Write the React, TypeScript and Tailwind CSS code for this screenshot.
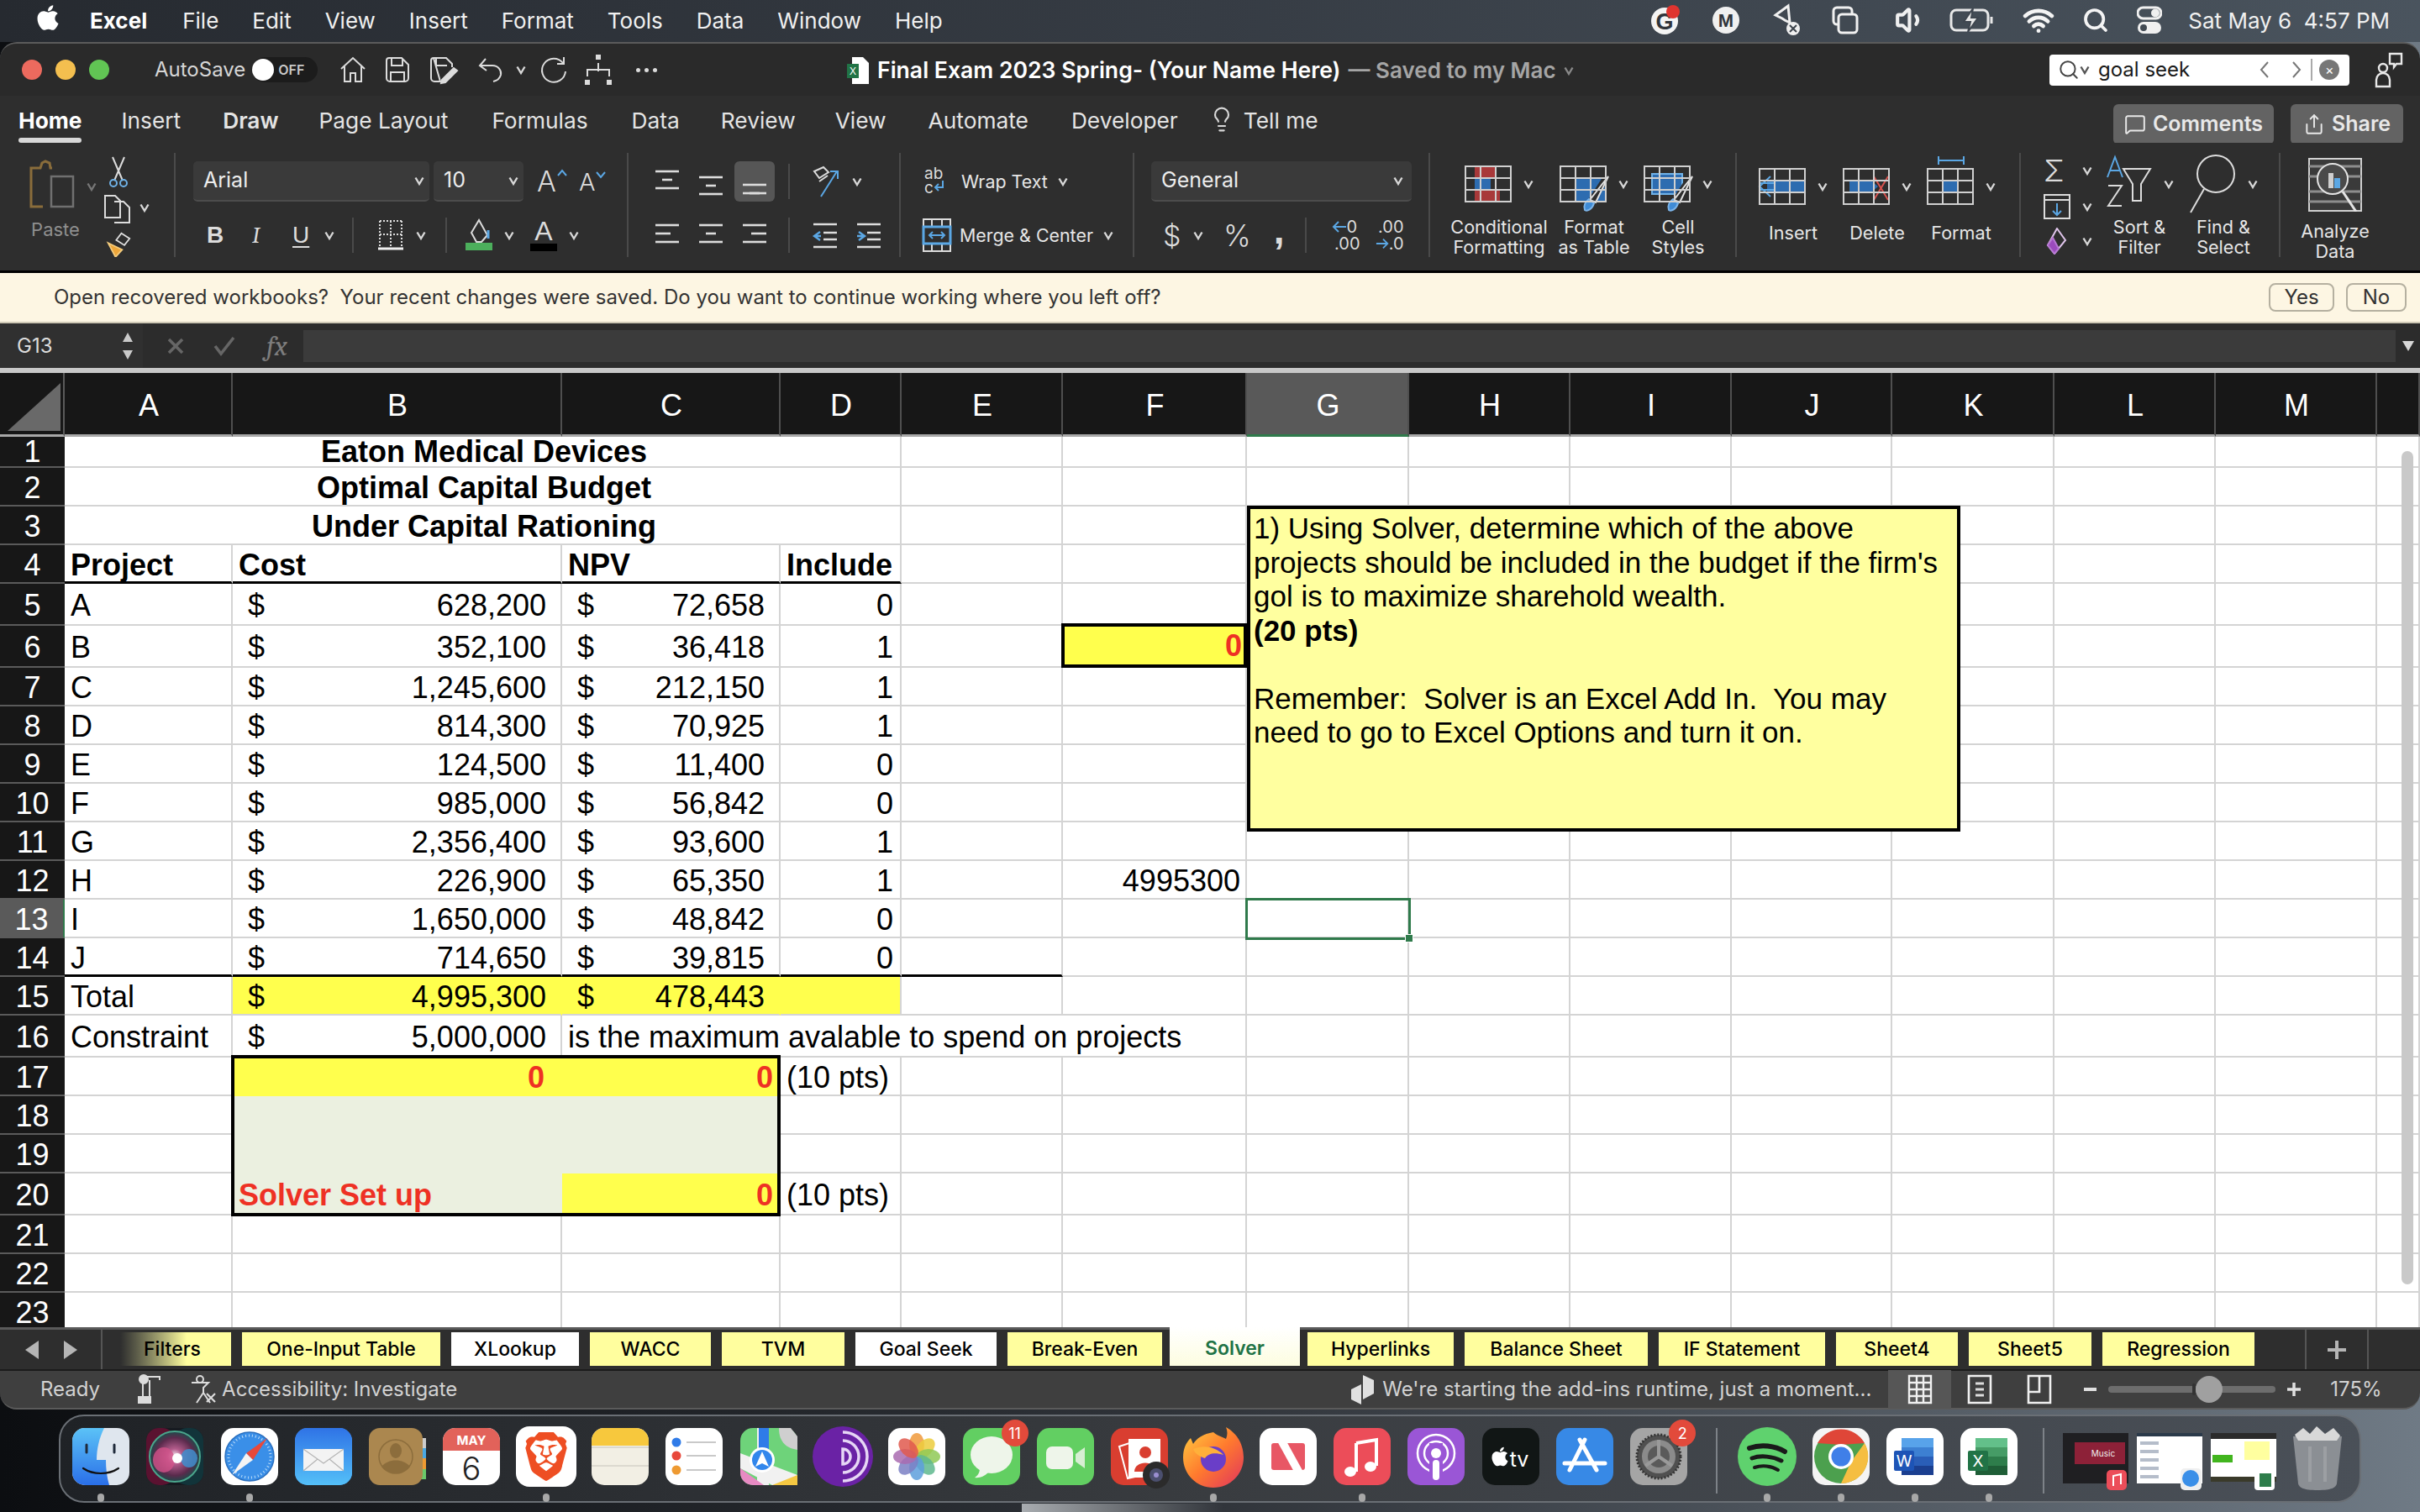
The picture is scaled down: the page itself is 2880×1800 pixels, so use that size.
import type { ReactNode } from "react";
import { FaApple } from "react-icons/fa";
import { SiBrave } from "react-icons/si";
import { Search, Wifi, Volume1, Lightbulb, MessageSquare, Share } from "lucide-react";

const UI = "font-['Inter',sans-serif]";
const ARIAL = "font-['Liberation_Sans',sans-serif]";

function Chev({ color = "#d8d8d8" }: { color?: string }) {
  return (
    <svg width="12" height="16" viewBox="0 0 12 16" fill="none" stroke={color} strokeWidth="2.4" className="shrink-0">
      <path d="M1.5 4.5 6 12l4.5-7.5" />
    </svg>
  );
}

function Ico({ w, h, children, className }: { w: number; h: number; children: ReactNode; className?: string }) {
  return (
    <svg width={w} height={h} viewBox={`0 0 ${w} ${h}`} fill="none" stroke="#dcdcdc" strokeWidth="2" overflow="visible" className={`shrink-0 ${className ?? ""}`}>
      {children}
    </svg>
  );
}

function MenuBar() {
  const items = ["File", "Edit", "View", "Insert", "Format", "Tools", "Data", "Window", "Help"];
  return (
    <div className={`${UI} h-[50px] shrink-0 bg-gradient-to-r from-[#262a30] via-[#363c44] to-[#4a545e] flex items-center text-[26px] text-[#f0f0f0] pl-[40px] pr-[36px] pb-[2px]`}>
      <FaApple className="text-[34px] text-white -mt-[6px]" />
      <span className="font-bold ml-[33px] mr-[42px] text-white">Excel</span>
      <div className="flex gap-[40px]">
        {items.map((m) => (
          <span key={m}>{m}</span>
        ))}
      </div>
      <div className="ml-auto flex items-center">
        <svg width="36" height="38" viewBox="0 0 36 38" className="mr-[37px]">
          <circle cx="17" cy="20" r="16" fill="#f4f4f4" />
          <text x="17" y="30" textAnchor="middle" fontSize="27" fontWeight="700" fill="#30353b" fontFamily="Liberation Sans">G</text>
          <circle cx="27" cy="9" r="8" fill="#e0342f" />
        </svg>
        <svg width="34" height="34" viewBox="0 0 34 34" className="mr-[39px]">
          <circle cx="17" cy="17" r="16" fill="#f0f0f0" />
          <text x="17" y="25" textAnchor="middle" fontSize="22" fontWeight="700" fill="#30353b" fontFamily="Liberation Sans">M</text>
        </svg>
        <svg width="34" height="40" viewBox="0 0 34 40" fill="none" stroke="#f0f0f0" strokeWidth="3" className="mr-[36px]">
          <path d="M3 14 18 3l2 20-6-3-3-2z" />
          <circle cx="24" cy="30" r="8" fill="#f0f0f0" stroke="none" />
          <path d="m20 26 8 8m0-8-8 8" stroke="#3c434b" strokeWidth="2" />
        </svg>
        <svg width="32" height="34" viewBox="0 0 32 34" fill="none" stroke="#f0f0f0" strokeWidth="3" className="mr-[43px]">
          <rect x="2" y="2" width="22" height="20" rx="4" />
          <rect x="8" y="10" width="22" height="22" rx="4" fill="#414952" />
        </svg>
        <Volume1 size={38} color="#f0f0f0" strokeWidth={2.6} className="mr-[27px]" />
        <svg width="52" height="30" viewBox="0 0 52 30" fill="none" stroke="#e8e8e8" strokeWidth="3" className="mr-[35px]">
          <rect x="2" y="3" width="44" height="24" rx="6" />
          <path d="M50 11v8" />
          <path d="M28 1 17 17h8l-3 12 12-17h-8z" fill="#e8e8e8" stroke="#3f464f" strokeWidth="2" />
        </svg>
        <Wifi size={38} color="#f4f4f4" strokeWidth={3} className="mr-[33px]" />
        <Search size={32} color="#f4f4f4" strokeWidth={2.8} className="mr-[33px]" />
        <svg width="30" height="36" viewBox="0 0 30 36" className="mr-[31px]">
          <rect x="1" y="3" width="28" height="13" rx="6.5" fill="none" stroke="#f0f0f0" strokeWidth="3" />
          <circle cx="22" cy="9.5" r="5" fill="#f0f0f0" />
          <rect x="1" y="20" width="28" height="14" rx="7" fill="#f0f0f0" />
          <circle cx="8" cy="27" r="4" fill="#414952" />
        </svg>
        <span className="whitespace-pre">Sat May 6  4:57 PM</span>
      </div>
    </div>
  );
}

function TitleBar() {
  return (
    <div className={`${UI} h-[64px] bg-[#2a2a2a] border-t-[2px] border-[#5b5b5b] rounded-t-[20px] flex items-center relative text-white`}>
      <div className="flex gap-[16px] ml-[26px]">
        <span className="w-[24px] h-[24px] rounded-full bg-[#ec6a5e]" />
        <span className="w-[24px] h-[24px] rounded-full bg-[#f4bf4f]" />
        <span className="w-[24px] h-[24px] rounded-full bg-[#61c554]" />
      </div>
      <span className="ml-[54px] text-[24px] text-[#d6d6d6]">AutoSave</span>
      <div className="ml-[8px] w-[78px] h-[30px] rounded-full bg-[#1c1c1c] flex items-center">
        <span className="w-[26px] h-[26px] rounded-full bg-white" />
        <span className="ml-[5px] text-[16px] font-semibold text-[#c9c9c9]">OFF</span>
      </div>
      <Ico w={32} h={32} className="ml-[26px]">
        <path d="M2 15 16 2l14 13M6 12v18h7V20h6v10h7V12" />
      </Ico>
      <Ico w={28} h={30} className="ml-[23px]">
        <path d="M4 1h15l8 8v16a4 4 0 0 1-4 4H5a4 4 0 0 1-4-4V4a3 3 0 0 1 3-3z" />
        <path d="M7 1v9h13V2M6 29V18h16v11" />
      </Ico>
      <Ico w={32} h={30} className="ml-[25px]">
        <path d="M4 1h15l7 7v4M12 29H5a4 4 0 0 1-4-4V4a3 3 0 0 1 3-3zM7 1v9h13" />
        <path d="m14 27 14-14 4 3-14 14-5 1z" fill="#dcdcdc" />
      </Ico>
      <Ico w={30} h={30} className="ml-[25px]">
        <path d="M9 2 2 10l8 6M3 10h14c7 0 11 6 10 11-1 4-4 7-9 8" />
      </Ico>
      <span className="ml-[15px]"><Chev /></span>
      <Ico w={32} h={32} className="ml-[17px]">
        <path d="M27 8a14 14 0 1 0 3 10M28 1v8h-8" />
      </Ico>
      <Ico w={34} h={36} className="ml-[20px]">
        <rect x="14" y="0" width="6" height="6" fill="#dcdcdc" stroke="none" />
        <rect x="1" y="30" width="6" height="6" fill="#dcdcdc" stroke="none" />
        <rect x="27" y="30" width="6" height="6" fill="#dcdcdc" stroke="none" />
        <path d="M17 10v10M4 26v-8h26v8" />
      </Ico>
      <span className="ml-[28px] flex gap-[5px]">
        <span className="w-[5px] h-[5px] rounded-full bg-[#dcdcdc]" />
        <span className="w-[5px] h-[5px] rounded-full bg-[#dcdcdc]" />
        <span className="w-[5px] h-[5px] rounded-full bg-[#dcdcdc]" />
      </span>
      <div className="absolute left-[1008px] top-[12px] flex items-center">
        <svg width="26" height="32" viewBox="0 0 26 32" className="mr-[10px]">
          <path d="M6 0h13l7 7v25H6z" fill="#fff" />
          <rect x="0" y="8" width="14" height="17" fill="#217346" />
          <text x="7" y="21" textAnchor="middle" fontSize="12" fill="#fff" fontFamily="Liberation Sans">X</text>
        </svg>
        <span className="text-[26.6px] font-semibold whitespace-nowrap">Final Exam 2023 Spring- (Your Name Here)</span>
        <span className="ml-[9px] text-[26px] font-semibold text-[#a5a5a5] whitespace-nowrap">— Saved to my Mac</span>
        <span className="ml-[9px]"><Chev color="#8a8a8a" /></span>
      </div>
      <div className="ml-auto mr-[20px] flex items-center">
        <div className="w-[357px] h-[37px] bg-white rounded-[4px] flex items-center text-[#1a1a1a] pl-[10px]">
          <Search size={26} color="#444" strokeWidth={1.8} />
          <Chev color="#555" />
          <span className="ml-[10px] text-[24px]">goal seek</span>
          <svg width="18" height="24" viewBox="0 0 18 24" fill="none" stroke="#777" strokeWidth="2" className="ml-[80px]"><path d="M13 3 5 12l8 9" /></svg>
          <svg width="18" height="24" viewBox="0 0 18 24" fill="none" stroke="#777" strokeWidth="2" className="ml-[20px]"><path d="m5 3 8 9-8 9" /></svg>
          <span className="ml-[8px] w-[2px] h-[26px] bg-[#aaa]" />
          <span className="ml-[8px] w-[24px] h-[24px] rounded-full bg-[#777] text-white text-[16px] flex items-center justify-center">×</span>
        </div>
        <svg width="34" height="44" viewBox="0 0 34 44" fill="none" stroke="#e8e8e8" strokeWidth="2.4" className="ml-[30px]">
          <path d="M18 3h14v12h-6l-3 4v-4h-5z" />
          <circle cx="10" cy="20" r="5" />
          <path d="M2 42v-8a8 8 0 0 1 16 0v8z" />
        </svg>
      </div>
    </div>
  );
}

function TabRow() {
  const tabs: [string, string][] = [
    ["Insert", "ml-[47px]"],
    ["Draw", "ml-[50px] font-semibold"],
    ["Page Layout", "ml-[48px]"],
    ["Formulas", "ml-[52px]"],
    ["Data", "ml-[52px]"],
    ["Review", "ml-[49px]"],
    ["View", "ml-[47px]"],
    ["Automate", "ml-[50px]"],
    ["Developer", "ml-[51px]"],
  ];
  return (
    <div className={`${UI} h-[56px] bg-[#2e2e2e] flex items-start text-[26.3px] text-[#e4e4e4] pl-[22px]`}>
      <span className="relative font-bold text-white pt-[10px] h-[56px]">
        Home
        <span className="absolute left-0 right-0 bottom-[0px] h-[6px] rounded-full bg-[#d8d8d8]" />
      </span>
      {tabs.map(([t, c]) => (
        <span key={t} className={`${c} pt-[10px] whitespace-nowrap`}>{t}</span>
      ))}
      <Lightbulb size={32} color="#d8d8d8" strokeWidth={1.6} className="ml-[36px] mt-[12px]" />
      <span className="ml-[10px] pt-[10px]">Tell me</span>
      <div className="ml-auto mr-[20px] mt-[10px] flex gap-[20px] font-semibold text-[#e8e8e8]">
        <div className="w-[191px] h-[48px] rounded-[6px] bg-[#636363] flex items-center justify-center gap-[8px] text-[25px]">
          <MessageSquare size={26} strokeWidth={1.8} />Comments
        </div>
        <div className="w-[134px] h-[48px] rounded-[6px] bg-[#636363] flex items-center justify-center gap-[8px] text-[25px]">
          <Share size={26} strokeWidth={1.8} />Share
        </div>
      </div>
    </div>
  );
}

function SheetIcon({ children, rows = 3 }: { children?: ReactNode; rows?: number }) {
  const ys = rows === 3 ? [15, 29] : [11, 22, 33];
  return (
    <Ico w={56} h={44}>
      {children}
      <rect x="1" y="1" width="54" height="42" stroke="#d0d0d0" />
      <path d="M19 1v42M37 1v42" stroke="#d0d0d0" />
      {ys.map((y) => (
        <path key={y} d={`M1 ${y}h54`} stroke="#d0d0d0" />
      ))}
    </Ico>
  );
}

function Brush() {
  return (
    <g>
      <path d="M56 14 38 42" stroke="#2e2e2e" strokeWidth="8" />
      <path d="m58 13-15 31-7-3z" fill="#2e2e2e" stroke="#e4e4e4" />
      <path d="M35 40c-4 3-7 8-5 13 3 2 9-1 11-8z" fill="#3f8bd6" stroke="#7db5ea" />
    </g>
  );
}

function BigBtn({ icon, label, w }: { icon: ReactNode; label: ReactNode; w: string }) {
  return (
    <div className={`${w} flex flex-col items-center shrink-0`}>
      <div className="h-[78px] flex items-center gap-[14px] pt-[2px]">
        {icon}
        <Chev />
      </div>
      <div className="mt-[5px] text-[21.6px] leading-[24px] text-center text-[#e6e6e6] whitespace-nowrap">{label}</div>
    </div>
  );
}

function AlignLines({ v, h }: { v: "top" | "mid" | "bot"; h: "l" | "c" | "r" }) {
  const y = v === "top" ? 3 : v === "mid" ? 10 : 19;
  const long = "h28";
  const short = h === "c" ? "M8" : h === "r" ? "M10" : "M0";
  return (
    <Ico w={28} h={30}>
      <path d={`M0 ${y}${long}`} strokeWidth="2.6" />
      <path d={`${short} ${y + 10}h${h === "c" ? 12 : 18}`} strokeWidth="2.6" />
      <path d={`M0 ${y + 20 > 30 ? 29 : y + 20}${long}`} strokeWidth="2.6" />
    </Ico>
  );
}

function Ribbon() {
  const sep = "h-[124px] border-r-2 border-[#4a4a4a] shrink-0";
  const selectBox = "h-[48px] rounded-[5px] bg-[#3a3a3a] border-b-2 border-[#4c4c4c] flex items-center text-[25px] text-[#ececec]";
  return (
    <div className={`${UI} h-[152px] bg-[#2e2e2e] flex items-start pt-[12px]`}>
      {/* clipboard */}
      <div className={`${sep} w-[209px] flex`}>
        <div className="ml-[30px] w-[62px] flex flex-col items-center">
          <Ico w={54} h={64} className="mt-[8px]">
            <path d="M28 10h-2l-1-6-5-2-4 2-2 6H3v46h14" stroke="#8a6d3b" strokeWidth="3" />
            <rect x="27" y="20" width="26" height="36" stroke="#707070" strokeWidth="2.5" fill="#2e2e2e" />
          </Ico>
          <span className="mt-[3px] ml-[10px] text-[22px] text-[#8f8f8f]">Paste</span>
        </div>
        <span className="ml-[11px] mt-[32px]"><Chev color="#777" /></span>
        <div className="ml-[9px] w-[34px] flex flex-col items-center">
          <Ico w={26} h={36} className="mt-[5px]">
            <path d="M6 0 18 28M20 0 8 28" />
            <circle cx="7" cy="31" r="4" stroke="#6fb2e8" />
            <circle cx="19" cy="31" r="4" stroke="#6fb2e8" />
          </Ico>
          <div className="relative mt-[9px]">
            <Ico w={34} h={34}>
              <path d="M1 1h12l6 6v20H1zM12 8h11l7 7v18H12" />
            </Ico>
            <span className="absolute left-[42px] top-[7px]"><Chev /></span>
          </div>
          <svg width="34" height="34" viewBox="0 0 34 34" className="mt-[10px]">
            <path d="m21 2 11 7-7 9L14 11z" fill="#2e2e2e" stroke="#e0e0e0" strokeWidth="2" />
            <path d="M3 15 22 24 13 34z" fill="#eda63a" stroke="#f4cc7e" strokeWidth="2" />
          </svg>
        </div>
      </div>
      {/* font */}
      <div className={`${sep} w-[539px] pl-[21px]`}>
        <div className="flex items-center h-[58px] pt-[10px]">
          <div className={`${selectBox} w-[281px] pl-[12px] pr-[6px] justify-between`}>Arial<Chev /></div>
          <div className={`${selectBox} w-[107px] ml-[5px] pl-[12px] pr-[6px] justify-between`}>10<Chev /></div>
          <div className="ml-[16px] text-[34px] font-light text-[#dcdcdc] leading-none flex items-start">
            A
            <svg width="12" height="10" viewBox="0 0 12 10" fill="none" stroke="#5ba7e4" strokeWidth="2" className="mt-[2px] ml-[1px]"><path d="m1 8 5-6 5 6" /></svg>
          </div>
          <div className="ml-[14px] text-[29px] font-light text-[#dcdcdc] leading-none flex items-start">
            A
            <svg width="12" height="10" viewBox="0 0 12 10" fill="none" stroke="#5ba7e4" strokeWidth="2" className="mt-[1px] ml-[1px]"><path d="m1 2 5 6 5-6" /></svg>
          </div>
        </div>
        <div className="flex items-center h-[66px] pt-[14px] pl-[16px] text-[28px] text-[#dcdcdc]">
          <span className={`${ARIAL} font-bold w-[20px]`}>B</span>
          <span className="ml-[34px] italic font-serif w-[14px]">I</span>
          <span className={`${ARIAL} ml-[34px] w-[22px] underline underline-offset-4`}>U</span>
          <span className="ml-[16px]"><Chev /></span>
          <span className="ml-[21px] w-[2px] h-[42px] bg-[#4a4a4a]" />
          <Ico w={30} h={36} className="ml-[29px]">
            <path d="M2 1v32M28 1v32M2 1h26M15 1v32M2 17h26" strokeDasharray="2 2" />
            <path d="M0 34h30" strokeWidth="3" stroke="#f0f0f0" />
          </Ico>
          <span className="ml-[15px]"><Chev /></span>
          <span className="ml-[23px] w-[2px] h-[42px] bg-[#4a4a4a]" />
          <div className="ml-[22px] flex flex-col items-center">
            <Ico w={30} h={26}><path d="m15 0 10 18-7 8h-6L6 15z" /><path d="M26 12v10" stroke="#5ba7e4" strokeWidth="3" /></Ico>
            <span className="w-[32px] h-[9px] bg-[#4caf5c] mt-[1px]" />
          </div>
          <span className="ml-[14px]"><Chev /></span>
          <div className="ml-[19px] flex flex-col items-center w-[32px] -mt-[2px]">
            <span className={`${ARIAL} text-[32px] leading-[30px]`}>A</span>
            <span className="w-[32px] h-[9px] bg-black" />
          </div>
          <span className="ml-[14px]"><Chev /></span>
        </div>
      </div>
      {/* alignment */}
      <div className={`${sep} w-[324px] pl-[32px]`}>
        <div className="flex items-center h-[58px] pt-[10px]">
          <AlignLines v="top" h="c" />
          <span className="ml-[24px]"><AlignLines v="mid" h="c" /></span>
          <span className="ml-[14px] w-[48px] h-[48px] rounded-[6px] bg-[#565656] flex items-center justify-center"><AlignLines v="bot" h="c" /></span>
          <span className="ml-[16px] w-[2px] h-[42px] bg-[#4a4a4a]" />
          <Ico w={36} h={36} className="ml-[26px]">
            <path d="M3 6 14 1l6 6-11 7zM9 18l10-7" />
            <path d="M11 36 30 6M22 6h9v9" stroke="#5ba7e4" />
          </Ico>
          <span className="ml-[12px]"><Chev /></span>
        </div>
        <div className="flex items-center h-[66px] pt-[14px]">
          <AlignLines v="top" h="l" />
          <span className="ml-[24px]"><AlignLines v="top" h="c" /></span>
          <span className="ml-[24px]"><AlignLines v="top" h="r" /></span>
          <span className="ml-[26px] w-[2px] h-[42px] bg-[#4a4a4a]" />
          <Ico w={30} h={30} className="ml-[26px]">
            <path d="M2 2h28M14 12h16M14 20h16M2 29h28" strokeWidth="2.6" />
            <path d="M10 11 3 16l7 5M3 16h8" stroke="#5ba7e4" strokeWidth="2.4" />
          </Ico>
          <Ico w={30} h={30} className="ml-[22px]">
            <path d="M2 2h28M14 12h16M14 20h16M2 29h28" strokeWidth="2.6" />
            <path d="m4 11 7 5-7 5M11 16H2" stroke="#5ba7e4" strokeWidth="2.4" />
          </Ico>
        </div>
      </div>
      {/* wrap / merge */}
      <div className={`${sep} w-[278px] pl-[26px] text-[21.4px] text-[#e6e6e6]`}>
        <div className="flex items-center h-[58px] pt-[10px]">
          <div className="w-[32px] flex flex-col items-start text-[19px] leading-[16px] text-[#dcdcdc] ml-[2px] mr-[2px]">
            <span>ab</span>
            <span className="flex items-center">c<svg width="12" height="18" viewBox="0 0 12 18" fill="none" stroke="#5ba7e4" strokeWidth="2"><path d="M11 0v8H2m4-4-4 4 4 4" /></svg></span>
          </div>
          <span className="ml-[10px]">Wrap Text</span>
          <span className="ml-[12px]"><Chev /></span>
        </div>
        <div className="flex items-center h-[66px] pt-[14px]">
          <Ico w={34} h={40}>
            <path d="M1 1h32v38H1zM1 10h32M1 30h32M11 1v9M23 1v9M11 30v9M23 30v9" />
            <path d="M1 10h32v20H1z" stroke="#5ba7e4" strokeWidth="3" />
            <path d="M8 20h18M12 16l-4 4 4 4M22 16l4 4-4 4" stroke="#5ba7e4" />
          </Ico>
          <span className="ml-[10px] whitespace-nowrap">Merge &amp; Center</span>
          <span className="ml-[12px]"><Chev /></span>
        </div>
      </div>
      {/* number */}
      <div className={`${sep} w-[352px] pl-[20px]`}>
        <div className="flex items-center h-[58px] pt-[10px]">
          <div className={`${selectBox} w-[310px] pl-[12px] pr-[10px] justify-between`}>General<Chev /></div>
        </div>
        <div className="flex items-center h-[66px] pt-[14px] pl-[14px] text-[#dcdcdc]">
          <span className="text-[34px] font-light w-[22px]">$</span>
          <span className="ml-[14px]"><Chev /></span>
          <span className="ml-[24px] text-[35px] font-light">%</span>
          <span className={`${ARIAL} ml-[27px] text-[46px] font-bold leading-[30px] h-[42px]`}>,</span>
          <span className="ml-[24px] w-[2px] h-[42px] bg-[#4a4a4a]" />
          <div className="ml-[30px] w-[34px] text-[20px] leading-[20px]">
            <div className="flex items-center"><svg width="18" height="16" viewBox="0 0 18 16" fill="none" stroke="#5ba7e4" strokeWidth="2"><path d="M8 2 2 8l6 6M2 8h15" /></svg>0</div>
            <div className="text-right">.00</div>
          </div>
          <div className="ml-[18px] w-[34px] text-[20px] leading-[20px]">
            <div className="text-right">.00</div>
            <div className="flex items-center"><svg width="18" height="16" viewBox="0 0 18 16" fill="none" stroke="#5ba7e4" strokeWidth="2"><path d="m10 2 6 6-6 6M16 8H1" /></svg>.0</div>
          </div>
        </div>
      </div>
      {/* styles */}
      <div className={`${sep} w-[365px] pl-[27px] flex gap-[3px]`}>
        <BigBtn
          w="w-[110px]"
          icon={
            <SheetIcon>
              <rect x="12" y="1" width="26" height="14" fill="#a8393a" stroke="none" />
              <rect x="12" y="15" width="19" height="14" fill="#2d6cb0" stroke="none" />
              <rect x="12" y="29" width="30" height="15" fill="#a8393a" stroke="none" />
            </SheetIcon>
          }
          label={<>Conditional<br />Formatting</>}
        />
        <BigBtn
          w="w-[110px]"
          icon={
            <SheetIcon>
              <rect x="19" y="15" width="36" height="28" fill="#2d6cb0" stroke="none" />
              <Brush />
            </SheetIcon>
          }
          label={<>Format<br />as Table</>}
        />
        <BigBtn
          w="w-[84px]"
          icon={
            <SheetIcon>
              <rect x="10" y="10" width="36" height="24" fill="#2d6cb0" stroke="#6fb2e8" />
              <Brush />
            </SheetIcon>
          }
          label={<>Cell<br />Styles</>}
        />
      </div>
      {/* cells */}
      <div className={`${sep} w-[338px] pl-[17px] flex`}>
        <BigBtn
          w="w-[100px]"
          icon={
            <SheetIcon>
              <rect x="10" y="15" width="46" height="14" fill="#2d6cb0" stroke="none" />
              <path d="M14 10 1 22l13 12M1 18h18M1 26h18" stroke="#5ba7e4" />
            </SheetIcon>
          }
          label="Insert"
        />
        <BigBtn
          w="w-[100px]"
          icon={
            <SheetIcon>
              <path d="M8 15h26l8 7-8 7H8z" fill="#2d6cb0" stroke="none" />
              <path d="m37 10 17 28M54 10 37 38" stroke="#d9534f" />
            </SheetIcon>
          }
          label="Delete"
        />
        <BigBtn
          w="w-[100px]"
          icon={
            <div className="relative">
              <SheetIcon>
                <rect x="19" y="15" width="18" height="14" fill="#2d6cb0" stroke="none" />
              </SheetIcon>
              <svg width="34" height="10" viewBox="0 0 34 10" fill="none" stroke="#5ba7e4" strokeWidth="2" className="absolute left-[12px] -top-[14px]">
                <path d="M2 0v10M32 0v10M2 5h30" />
              </svg>
            </div>
          }
          label="Format"
        />
      </div>
      {/* editing */}
      <div className={`${sep} w-[309px] pl-[27px] flex`}>
        <div className="w-[60px] flex flex-col">
          <div className="flex items-center h-[42px] gap-[14px]">
            <span className="text-[36px] font-light leading-none w-[32px] text-[#dcdcdc]">Σ</span>
            <Chev />
          </div>
          <div className="flex items-center h-[44px] gap-[14px]">
            <Ico w={32} h={30}>
              <path d="M1 1h30v28H1zM1 7h30" />
              <path d="M16 11v14m-5-5 5 5 5-5" stroke="#5ba7e4" />
            </Ico>
            <Chev />
          </div>
          <div className="flex items-center h-[38px] gap-[14px]">
            <svg width="32" height="32" viewBox="0 0 32 32" fill="none" stroke="#e0c5ec" strokeWidth="2">
              <path d="M16 1 26 15 13 31 5 21z" />
              <path d="M5 21 13 31l5-6-7-13z" fill="#9b4bbd" stroke="#b678d2" />
            </svg>
            <Chev />
          </div>
        </div>
        <BigBtn
          w="w-[100px] ml-[4px]"
          icon={
            <Ico w={56} h={68}>
              <path d="M3 26 12 2l9 24M6 18h12" stroke="#5ba7e4" />
              <path d="M4 36h16L4 60h16" />
              <path d="M22 16h32L43 34v20h-10V34z" />
            </Ico>
          }
          label={<>Sort &amp;<br />Filter</>}
        />
        <BigBtn
          w="w-[100px]"
          icon={
            <Ico w={56} h={68}>
              <circle cx="32" cy="22" r="22" />
              <path d="M18 40 2 68" />
            </Ico>
          }
          label={<>Find &amp;<br />Select</>}
        />
      </div>
      {/* analyze */}
      <div className="w-[130px] flex flex-col items-center">
        <div className="h-[78px] flex items-start pt-[6px]">
          <svg width="64" height="64" viewBox="0 0 64 64" fill="none" stroke="#d0d0d0" strokeWidth="2">
            <rect x="1" y="1" width="62" height="62" fill="#3a3a3a" />
            <path d="M1 10h62M1 22h62M1 40h62M1 52h62" stroke="#8d8d8d" strokeWidth="3" />
            <circle cx="29" cy="25" r="18" fill="#4a4a4a" stroke="#e4e4e4" />
            <rect x="24" y="18" width="6" height="18" fill="#cfcfcf" stroke="none" />
            <rect x="31" y="24" width="7" height="12" fill="#5ba7e4" stroke="none" />
            <path d="m41 40 16 24" stroke="#e4e4e4" strokeWidth="3" />
          </svg>
        </div>
        <div className="mt-[3px] text-[21.6px] leading-[24px] text-center text-[#e6e6e6]">Analyze<br />Data</div>
      </div>
    </div>
  );
}

function Notice() {
  return (
    <div className={`${UI} h-[63px] bg-[#fdf6e3] border-t-[3px] border-black border-b-2 border-b-[#cfc9b6] flex items-center pl-[64px] pr-[16px] text-[24px] text-[#333] whitespace-pre`}>
      <span>Open recovered workbooks?  Your recent changes were saved. Do you want to continue working where you left off?</span>
      <span className="ml-auto w-[78px] h-[34px] rounded-[8px] border-2 border-[#b5b0a0] flex items-center justify-center">Yes</span>
      <span className="ml-[14px] w-[72px] h-[34px] rounded-[8px] border-2 border-[#b5b0a0] flex items-center justify-center">No</span>
    </div>
  );
}

function FormulaBar() {
  return (
    <div className={`${UI} h-[59px] shrink-0 bg-[#2c2c2c] border-b-[6px] border-[#c8c8c8] flex items-center text-[#dcdcdc]`}>
      <div className="w-[170px] h-full bg-[#303030] flex items-center justify-between pl-[20px] pr-[10px] text-[24px]">
        G13
        <svg width="16" height="36" viewBox="0 0 16 36" fill="#c9c9c9"><path d="m8 2 6 11H2zM8 34 2 23h12z" /></svg>
      </div>
      <svg width="22" height="22" viewBox="0 0 22 22" stroke="#666" strokeWidth="3.6" className="ml-[28px]"><path d="m3 3 16 16M19 3 3 19" /></svg>
      <svg width="28" height="24" viewBox="0 0 28 24" fill="none" stroke="#666" strokeWidth="3.6" className="ml-[33px]"><path d="m3 12 7 9L25 2" /></svg>
      <span className="ml-[36px] w-[36px] font-serif italic text-[34px] text-[#7d7d7d] leading-none">fx</span>
      <div className="w-[2490px] h-[38px] bg-[#3b3b3b] ml-[8px]" />
      <svg width="14" height="12" viewBox="0 0 14 12" fill="#d8d8d8" className="ml-[8px]"><path d="M0 0h14L7 12z" /></svg>
    </div>
  );
}

type Cell = { t?: ReactNode; cls?: string; span?: number };

const COLS = ["A", "B", "C", "D", "E", "F", "G", "H", "I", "J", "K", "L", "M", "N"];
const GRID = "border-r-2 border-b-2 border-[#d4d4d4]";
const NO_LINES = "!border-transparent";
const YELLOW = "bg-[#ffff4d]";
const SAGE = "bg-[#ebf0e0]";

function acct(v: string, cls = ""): Cell {
  return {
    cls,
    t: (
      <span className="flex justify-between w-full pl-[18px] pr-[17px]">
        <span>$</span>
        <span>{v}</span>
      </span>
    ),
  };
}

function buildCells() {
  const c: Record<string, Cell> = {};
  c.A1 = { span: 4, t: <span className="translate-y-[3px]">Eaton Medical Devices</span>, cls: "font-bold justify-center !items-end pl-[4px]" };
  c.A2 = { span: 4, t: "Optimal Capital Budget", cls: "font-bold justify-center pl-[4px]" };
  c.A3 = { span: 4, t: "Under Capital Rationing", cls: "font-bold justify-center pl-[4px]" };
  const head = "font-bold border-b-[3px] border-b-black";
  c.A4 = { t: "Project", cls: head + " pl-[7px]" };
  c.B4 = { t: "Cost", cls: head + " pl-[7px]" };
  c.C4 = { t: "NPV", cls: head + " pl-[7px]" };
  c.D4 = { t: "Include", cls: head + " pl-[7px]" };
  const data: [string, string, string, string][] = [
    ["A", "628,200", "72,658", "0"],
    ["B", "352,100", "36,418", "1"],
    ["C", "1,245,600", "212,150", "1"],
    ["D", "814,300", "70,925", "1"],
    ["E", "124,500", "11,400", "0"],
    ["F", "985,000", "56,842", "0"],
    ["G", "2,356,400", "93,600", "1"],
    ["H", "226,900", "65,350", "1"],
    ["I", "1,650,000", "48,842", "0"],
    ["J", "714,650", "39,815", "0"],
  ];
  data.forEach(([p, cost, npv, inc], i) => {
    const r = i + 5;
    const last = r === 14 ? " border-b-[3px] border-b-black" : "";
    c[`A${r}`] = { t: p, cls: "pl-[7px]" + last };
    c[`B${r}`] = acct(cost, last);
    c[`C${r}`] = acct(npv, last);
    c[`D${r}`] = { t: inc, cls: "justify-end pr-[8px]" + last };
    if (last) c[`E${r}`] = { cls: last };
  });
  c.A15 = { t: "Total", cls: "pl-[7px]" };
  c.B15 = acct("4,995,300", `${YELLOW} !border-r-transparent`);
  c.C15 = acct("478,443", `${YELLOW} !border-r-transparent`);
  c.D15 = { cls: YELLOW };
  c.A16 = { t: "Constraint", cls: "pl-[7px]" };
  c.B16 = acct("5,000,000");
  c.C16 = { span: 4, t: "is the maximum avalable to spend on projects", cls: "pl-[7px] whitespace-nowrap" };
  const zero = "font-bold text-[#ee3124] justify-end";
  c.B17 = { t: "0", cls: `${zero} pr-[19px] ${YELLOW} ${NO_LINES}` };
  c.C17 = { t: "0", cls: `${zero} pr-[7px] ${YELLOW} ${NO_LINES}` };
  c.D17 = { t: "(10 pts)", cls: "pl-[7px] whitespace-nowrap" };
  c.B18 = { cls: `${SAGE} ${NO_LINES}` };
  c.C18 = { cls: `${SAGE} ${NO_LINES}` };
  c.B19 = { cls: `${SAGE} ${NO_LINES}` };
  c.C19 = { cls: `${SAGE} ${NO_LINES}` };
  c.B20 = { t: "Solver Set up", cls: `font-bold text-[#ee3124] pl-[7px] ${SAGE} ${NO_LINES}` };
  c.C20 = { t: "0", cls: `${zero} pr-[7px] ${YELLOW} ${NO_LINES}` };
  c.D20 = { t: "(10 pts)", cls: "pl-[7px] whitespace-nowrap" };
  c.F12 = { t: "4995300", cls: "justify-end pr-[6px]" };
  return c;
}

function Sheet() {
  const cells = buildCells();
  const out: ReactNode[] = [];
  for (let r = 1; r <= 23; r++) {
    let skip = 0;
    COLS.forEach((col, i) => {
      if (skip > 0) {
        skip--;
        return;
      }
      const cell = cells[`${col}${r}`] ?? {};
      const span = cell.span ?? 1;
      skip = span - 1;
      out.push(
        <div
          key={`${col}${r}`}
          style={{ gridRow: r + 1, gridColumn: `${i + 2} / span ${span}` }}
          className={`flex items-center pt-[3px] overflow-hidden ${GRID} ${cell.cls ?? ""}`}
        >
          {cell.t}
        </div>
      );
    });
    out.push(
      <div
        key={`h${r}`}
        style={{ gridRow: r + 1, gridColumn: 1 }}
        className={`flex items-center justify-center pt-[3px] overflow-hidden text-white border-b-2 border-[#5a5a5a] ${r === 13 ? "bg-[#5a5a5a] border-r-2 border-r-[#2f7a4b]" : "bg-[#171717]"} ${r === 1 ? "!items-end" : ""}`}
      >
        {r === 1 ? <span className="translate-y-[3px]">1</span> : r}
      </div>
    );
  }
  return (
    <div className={`${ARIAL} relative h-[1136px] shrink-0 overflow-hidden bg-white text-black text-[36px] leading-[41px] grid grid-cols-[77px_200px_392px_260px_144px_192px_219px_193px_192px_192px_191px_193px_192px_192px_51px] grid-rows-[76px_37px_46px_46px_46px_50px_50px_46px_46px_46px_46px_46px_46px_46px_46px_46px_50px_46px_46px_46px_50px_46px_46px_46px]`}>
      <div className="[grid-row:1] [grid-column:1] bg-[#171717] border-r-2 border-[#5a5a5a] border-b-[3px] border-b-[#a8a8a8]">
        <svg width="75" height="73" viewBox="0 0 75 73"><path d="M72 12v57H9z" fill="#696969" /></svg>
      </div>
      {COLS.map((col, i) => (
        <div
          key={col}
          style={{ gridRow: 1, gridColumn: i + 2 }}
          className={`flex items-center justify-center pt-[3px] pl-[2px] text-white border-r-2 border-[#4f4f4f] border-b-[3px] ${col === "G" ? "bg-[#595959] border-b-[#2f7a4b]" : "bg-[#171717] border-b-[#a8a8a8]"}`}
        >
          {col === "N" ? "" : col}
        </div>
      ))}
      {out}
      {/* F6 thick box */}
      <div className="[grid-row:7] [grid-column:7] -mt-[3px] -ml-[2px] border-[4px] border-black bg-[#ffff4d] flex items-center justify-end pr-[2px] font-bold text-[#ee3124] z-[1]">0</div>
      {/* B17:C20 outline */}
      <div className="[grid-row:18/22] [grid-column:3/5] -mt-[3px] -ml-[2px] -mb-[1px] border-[4px] border-black z-[1]" />
      {/* G13 selection */}
      <div className="[grid-row:14] [grid-column:8] relative -mt-[2px] -ml-[2px] -mr-[2px] -mb-[2px] border-[3px] border-[#2f7a4b] z-[1]">
        <span className="absolute -right-[6px] -bottom-[6px] w-[10px] h-[10px] bg-[#2f7a4b] border border-white" />
      </div>
      {/* text box */}
      <div className="absolute left-[1484px] top-[158px] w-[849px] h-[388px] bg-[#ffff9f] border-[4px] border-black pl-[4px] pt-[3px] text-[35px] leading-[40.5px] text-black z-[2] whitespace-pre">
        {"1) Using Solver, determine which of the above\nprojects should be included in the budget if the firm's\ngol is to maximize sharehold wealth.\n"}
        <b>(20 pts)</b>
        {"\n\nRemember:  Solver is an Excel Add In.  You may\nneed to go to Excel Options and turn it on."}
      </div>
      {/* scrollbar */}
      <div className="absolute left-[2858px] top-[93px] w-[14px] h-[992px] rounded-full bg-[#c9c9c9] z-[2]" />
    </div>
  );
}

function SheetTabs() {
  const tabs: [string, string, string][] = [
    ["Filters", "w-[132px] pr-[8px]", "bg-gradient-to-r from-[#2e2e2e] via-[#fffe9e] to-[#fffe9e] via-60%"],
    ["One-Input Table", "w-[236px]", "bg-[#fffe9e]"],
    ["XLookup", "w-[152px]", "bg-white"],
    ["WACC", "w-[144px]", "bg-[#fffe9e]"],
    ["TVM", "w-[146px]", "bg-[#fffe9e]"],
    ["Goal Seek", "w-[168px]", "bg-white"],
    ["Break-Even", "w-[184px]", "bg-[#fffe9e]"],
  ];
  const after: [string, string][] = [
    ["Hyperlinks", "w-[174px]"],
    ["Balance Sheet", "w-[218px]"],
    ["IF Statement", "w-[198px]"],
    ["Sheet4", "w-[145px]"],
    ["Sheet5", "w-[146px]"],
    ["Regression", "w-[181px]"],
  ];
  return (
    <div className={`${UI} h-[52px] shrink-0 bg-[#2e2e2e] border-t-[3px] border-[#5a5a5a] border-b-2 border-b-[#1c1c1c] flex text-[23px] font-medium text-black`}>
      <div className="w-[122px] shrink-0 flex items-center border-r-2 border-[#555]">
        <svg width="16" height="22" viewBox="0 0 16 22" fill="#b5b5b5" className="ml-[30px]"><path d="M16 0v22L0 11z" /></svg>
        <svg width="16" height="22" viewBox="0 0 16 22" fill="#b5b5b5" className="ml-[30px]"><path d="M0 0v22l16-11z" /></svg>
      </div>
      <div className="flex gap-[13px] pt-[3px] ml-[21px]">
        {tabs.map(([t, w, bg]) => (
          <div key={t} className={`${w} ${bg} h-[40px] flex items-center justify-center`}>{t}</div>
        ))}
      </div>
      <div className="ml-[9px] w-[155px] -mt-[3px] h-[46px] pt-[4px] bg-gradient-to-b from-white to-[#fdfde0] flex items-center justify-center font-semibold text-[#217346]">Solver</div>
      <div className="flex gap-[13px] pt-[3px] ml-[9px]">
        {after.map(([t, w]) => (
          <div key={t} className={`${w} bg-[#fffe9e] h-[40px] flex items-center justify-center`}>{t}</div>
        ))}
      </div>
      <div className="ml-[60px] w-[76px] border-x-2 border-[#555] flex items-center justify-center">
        <svg width="22" height="22" viewBox="0 0 22 22" stroke="#b5b5b5" strokeWidth="4"><path d="M11 0v22M0 11h22" /></svg>
      </div>
    </div>
  );
}

function StatusBar() {
  return (
    <div className={`${UI} h-[46px] shrink-0 bg-[#3f3f3f] rounded-b-[20px] border-b-2 border-[#5b5b5b] flex items-center text-[24px] text-[#d2d2d2]`}>
      <span className="ml-[48px]">Ready</span>
      <Ico w={30} h={34} className="ml-[45px]">
        <path d="M10 2h16v4M14 6v24a4 4 0 0 1-4 3H2c3 0 4-2 4-4V8" />
        <circle cx="7" cy="5" r="5" fill="#dcdcdc" />
        <rect x="1" y="26" width="14" height="7" fill="#dcdcdc" />
      </Ico>
      <Ico w={32} h={34} className="ml-[32px]">
        <circle cx="12" cy="5" r="4" />
        <path d="M2 9h20l-6 6v6l8 12M16 21l-8 12" />
        <path d="m20 22 10 10m0-10L20 32" strokeWidth="2.2" />
      </Ico>
      <span className="ml-[6px] whitespace-nowrap">Accessibility: Investigate</span>
      <svg width="30" height="36" viewBox="0 0 30 36" fill="#e0e0e0" className="ml-[1062px]">
        <path d="m16 1 13 6v16L16 30z" />
        <path d="M2 18 14 12v24l-12-6z" />
      </svg>
      <span className="ml-[9px] whitespace-nowrap w-[602px]">We're starting the add-ins runtime, just a moment...</span>
      <div className="w-[75px] h-[46px] bg-[#565656] flex items-center justify-center">
        <Ico w={28} h={34}>
          <path d="M1 1h26v32H1zM10 1v32M18 1v32M1 9h26M1 17h26M1 25h26" strokeWidth="2.4" stroke="#f0f0f0" />
        </Ico>
      </div>
      <Ico w={28} h={34} className="ml-[20px]">
        <path d="M1 1h26v32H1z" strokeWidth="2.6" stroke="#f0f0f0" />
        <path d="M9 10h10M9 17h10M9 24h10" strokeWidth="3" />
      </Ico>
      <Ico w={28} h={34} className="ml-[43px]">
        <path d="M1 1h26v32H1zM14 1v19H1" strokeWidth="2.6" stroke="#f0f0f0" />
      </Ico>
      <span className="ml-[39px] w-[15px] h-[4px] bg-[#e0e0e0]" />
      <div className="ml-[14px] w-[199px] h-[8px] rounded-full bg-[#6d6d6d] flex items-center relative">
        <span className="absolute left-[100px] w-[4px] h-[14px] rounded-full bg-[#333]" />
        <span className="absolute left-[104px] w-[32px] h-[32px] rounded-full bg-[#a0a0a0]" />
      </div>
      <svg width="16" height="16" viewBox="0 0 16 16" stroke="#e0e0e0" strokeWidth="3.5" className="ml-[14px]"><path d="M8 0v16M0 8h16" /></svg>
      <span className="ml-[35px]">175%</span>
    </div>
  );
}

function Tile({ children, bg }: { children?: ReactNode; bg?: string }) {
  return (
    <svg width="68" height="68" viewBox="0 0 68 68" overflow="visible" className="shrink-0">
      <rect width="68" height="68" rx="15" fill={bg ?? "#fff"} />
      {children}
    </svg>
  );
}

const DOCK_ICONS: { k: string; on?: boolean; el: ReactNode }[] = [
  {
    k: "finder",
    on: true,
    el: (
      <Tile bg="#dfe6ee">
        <defs>
          <linearGradient id="fd" x1="0" y1="0" x2="0" y2="1">
            <stop offset="0" stopColor="#5bc2f7" />
            <stop offset="1" stopColor="#2a6fe8" />
          </linearGradient>
        </defs>
        <path d="M15 0h23c-6 12-9 25-9 38h11c0 10 1 20 4 30H15A15 15 0 0 1 0 53V15A15 15 0 0 1 15 0z" fill="url(#fd)" />
        <path d="M17 20v9M50 20v9" stroke="#1f2a3a" strokeWidth="3" strokeLinecap="round" />
        <path d="M13 48c12 8 30 8 42 0" stroke="#111" strokeWidth="2.2" fill="none" strokeLinecap="round" />
      </Tile>
    ),
  },
  {
    k: "siri",
    el: (
      <Tile bg="#161a20">
        <defs>
          <radialGradient id="sr" cx="0.5" cy="0.5" r="0.5">
            <stop offset="0" stopColor="#ffffff" />
            <stop offset="0.3" stopColor="#b45c8c" />
            <stop offset="0.75" stopColor="#5a2a4c" />
            <stop offset="1" stopColor="#1e4a4a" />
          </radialGradient>
        </defs>
        <rect width="34" height="68" rx="15" fill="#5a1230" />
        <rect x="34" width="34" height="68" rx="15" fill="#12343a" />
        <circle cx="34" cy="34" r="30" fill="url(#sr)" stroke="#4ba58c" strokeWidth="2" />
        <ellipse cx="51" cy="36" rx="10" ry="11" fill="#3f8fcf" opacity="0.85" />
        <ellipse cx="21" cy="38" rx="13" ry="15" fill="#d2538a" opacity="0.8" />
        <circle cx="37" cy="36" r="6" fill="#fff" />
      </Tile>
    ),
  },
  {
    k: "safari",
    on: true,
    el: (
      <Tile>
        <circle cx="34" cy="34" r="29" fill="#3a8fe8" stroke="#2a6fbe" strokeWidth="1.5" />
        <circle cx="34" cy="34" r="25" fill="none" stroke="#bcdcf7" strokeWidth="3" strokeDasharray="1 3" />
        <path d="m55 12-17 26-8-8z" fill="#e8483b" />
        <path d="m13 56 17-26 8 8z" fill="#f4f4f4" />
      </Tile>
    ),
  },
  {
    k: "mail",
    el: (
      <Tile bg="#3d8bef">
        <defs>
          <linearGradient id="ml" x1="0" y1="0" x2="0" y2="1">
            <stop offset="0" stopColor="#2f73e6" />
            <stop offset="1" stopColor="#54c0f8" />
          </linearGradient>
        </defs>
        <rect width="68" height="68" rx="15" fill="url(#ml)" />
        <rect x="10" y="25" width="48" height="26" rx="2" fill="#f3f3f3" />
        <path d="m10 25 24 17 24-17M10 51l17-14M58 51 41 37" stroke="#b5b5b5" fill="none" strokeWidth="1.2" />
      </Tile>
    ),
  },
  {
    k: "contacts",
    el: (
      <svg width="68" height="68" viewBox="0 0 68 68" className="shrink-0">
        <rect x="56" y="12" width="12" height="12" fill="#ccc" />
        <rect x="56" y="24" width="12" height="12" fill="#4aa8e2" />
        <rect x="56" y="36" width="12" height="13" fill="#ee9a32" />
        <rect x="56" y="49" width="12" height="12" fill="#6ac96a" />
        <rect x="0" y="0" width="64" height="68" rx="13" fill="#ab874f" />
        <circle cx="32" cy="34" r="20" fill="none" stroke="#8c6d3c" strokeWidth="1.5" />
        <ellipse cx="32" cy="27" rx="7" ry="9" fill="#8c6d3c" />
        <path d="M15 46c8-10 26-10 34 0-8 10-26 10-34 0z" fill="#8c6d3c" />
      </svg>
    ),
  },
  {
    k: "calendar",
    el: (
      <Tile>
        <path d="M15 0h38a15 15 0 0 1 15 15v12H0V15A15 15 0 0 1 15 0z" fill="#e2625a" />
        <text x="34" y="20" textAnchor="middle" fontSize="15" fontWeight="700" fill="#fff" fontFamily="Inter">MAY</text>
        <text x="34" y="62" textAnchor="middle" fontSize="38" fill="#222" fontFamily="Inter" fontWeight="300">6</text>
      </Tile>
    ),
  },
  {
    k: "brave",
    on: true,
    el: (
      <svg width="72" height="72" viewBox="0 0 72 72" className="shrink-0 -m-[2px]">
        <rect width="72" height="72" rx="16" fill="#fff" />
        <foreignObject x="7" y="5" width="58" height="62">
          <SiBrave className="w-[58px] h-[62px] text-[#ee4e23]" />
        </foreignObject>
      </svg>
    ),
  },
  {
    k: "notes",
    el: (
      <Tile bg="#f2efe4">
        <path d="M15 0h38a15 15 0 0 1 15 15v6H0v-6A15 15 0 0 1 15 0z" fill="#f7c83d" />
        <path d="M0 23h68M0 45h68" stroke="#dcd9cf" strokeWidth="2" />
      </Tile>
    ),
  },
  {
    k: "reminders",
    el: (
      <Tile>
        <circle cx="13" cy="17" r="5.5" fill="#2f7be8" />
        <circle cx="13" cy="33" r="5.5" fill="#e8483b" />
        <circle cx="13" cy="50" r="5.5" fill="#ee9a32" />
        <path d="M25 17h35M25 33h35M25 50h35" stroke="#c9c9c9" strokeWidth="2" />
      </Tile>
    ),
  },
  {
    k: "maps",
    el: (
      <Tile bg="#6ed37a">
        <path d="M0 30 68 56v12H38L0 48z" fill="#f1f1f1" />
        <path d="M20 0h14v68H20z" fill="#f1f1f1" />
        <path d="M22 0h12v32H22z" fill="#2f7be8" />
        <path d="M0 48l28 20H15A15 15 0 0 1 0 53z" fill="#e78ac3" />
        <path d="M38 68 68 56v12z" fill="#f5c842" />
        <path d="M46 0c0 18 10 24 22 26V10l-8-10z" fill="#cfcfcf" />
        <circle cx="26" cy="38" r="15" fill="#fff" />
        <circle cx="26" cy="38" r="12" fill="#3287ec" />
        <path d="m26 28 8 18-8-4-8 4z" fill="#fff" />
      </Tile>
    ),
  },
  {
    k: "tor",
    el: (
      <svg width="72" height="72" viewBox="0 0 72 72" className="shrink-0 -m-[2px]">
        <circle cx="36" cy="36" r="36" fill="#6a22a5" />
        <path d="M36 7a29 29 0 0 1 0 58M36 17a19 19 0 0 1 0 38M36 27a9 9 0 0 1 0 18z" fill="none" stroke="#e6d6f5" strokeWidth="3.5" />
      </svg>
    ),
  },
  {
    k: "photos",
    el: (
      <Tile>
        {[
          ["#f09a3c", 0],
          ["#eccc3e", 45],
          ["#8fc956", 90],
          ["#5fb98e", 135],
          ["#5d9fdc", 180],
          ["#7b80c4", 225],
          ["#a96bb0", 270],
          ["#e0594d", 315],
        ].map(([color, a]) => (
          <ellipse key={a as number} cx="34" cy="20" rx="9" ry="14" fill={color as string} opacity="0.85" transform={`rotate(${a} 34 34)`} />
        ))}
      </Tile>
    ),
  },
  {
    k: "messages",
    el: (
      <Tile bg="#62cf62">
        <ellipse cx="34" cy="32" rx="25" ry="22" fill="#eef5ea" />
        <path d="M20 48c0 6-3 9-6 11 6 1 12-2 16-6z" fill="#eef5ea" />
      </Tile>
    ),
  },
  {
    k: "facetime",
    el: (
      <Tile bg="#62cf62">
        <rect x="11" y="22" width="32" height="27" rx="7" fill="#eef5ea" />
        <path d="m46 31 11-8v25l-11-8z" fill="#d7eed4" />
      </Tile>
    ),
  },
  {
    k: "photobooth",
    el: (
      <Tile bg="#d93e30">
        <path d="m10 22 12-4 7 40-9 2z" fill="#d93e30" stroke="#fff" strokeWidth="2" />
        <rect x="21" y="13" width="38" height="46" fill="#fff" />
        <circle cx="41" cy="29" r="7" fill="#d93e30" />
        <path d="M28 52c0-14 26-14 26 0z" fill="#d93e30" />
        <circle cx="54" cy="56" r="16" fill="#2b2b2b" />
        <circle cx="54" cy="56" r="8" fill="#4b4f6e" />
        <circle cx="54" cy="56" r="3" fill="#9a8fd0" />
      </Tile>
    ),
  },
  {
    k: "firefox",
    on: true,
    el: (
      <svg width="72" height="74" viewBox="0 0 72 74" className="shrink-0 -mx-[2px] -my-[3px]">
        <defs>
          <linearGradient id="ff" x1="0" y1="0" x2="1" y2="1">
            <stop offset="0" stopColor="#ffd240" />
            <stop offset="0.5" stopColor="#ff7a2e" />
            <stop offset="1" stopColor="#e0335f" />
          </linearGradient>
        </defs>
        <path d="M36 8c6 5 10 5 15 8 2-5 2-9 0-14 11 6 21 18 21 36 0 20-16 36-36 36S0 58 0 38c0-10 3-17 9-23l3 7c4-7 12-12 24-14z" fill="url(#ff)" />
        <circle cx="36" cy="40" r="15" fill="#6a3ec8" />
        <path d="M12 28c12-5 26-3 36 7-10-3-18-2-22 4-6-2-12-5-14-11z" fill="#ffb03a" />
      </svg>
    ),
  },
  {
    k: "news",
    el: (
      <Tile>
        <rect x="14" y="18" width="40" height="32" rx="3" fill="#e85765" />
        <path d="M20 14h11l22 40H42z" fill="#fff" />
      </Tile>
    ),
  },
  {
    k: "music",
    on: true,
    el: (
      <Tile bg="#ec4d59">
        <path d="M27 18 51 14v31" stroke="#fff" strokeWidth="4" fill="none" />
        <path d="M27 18v34" stroke="#fff" strokeWidth="4" />
        <ellipse cx="20" cy="52" rx="7" ry="6" fill="#fff" />
        <ellipse cx="44" cy="46" rx="7" ry="6" fill="#fff" />
      </Tile>
    ),
  },
  {
    k: "podcasts",
    el: (
      <Tile bg="#9a56d6">
        <circle cx="34" cy="30" r="22" fill="none" stroke="#fff" strokeWidth="2.5" />
        <circle cx="34" cy="30" r="14" fill="none" stroke="#fff" strokeWidth="2.5" />
        <rect x="26" y="18" width="16" height="40" fill="#9a56d6" />
        <circle cx="34" cy="30" r="6" fill="#fff" />
        <rect x="30" y="38" width="8" height="24" rx="4" fill="#fff" />
      </Tile>
    ),
  },
  {
    k: "tv",
    el: (
      <Tile bg="#111615">
        <foreignObject x="9" y="21" width="24" height="26">
          <FaApple className="w-[24px] h-[26px] text-white" />
        </foreignObject>
        <text x="44" y="46" textAnchor="middle" fontSize="25" fill="#fff" fontFamily="Inter">tv</text>
      </Tile>
    ),
  },
  {
    k: "appstore",
    el: (
      <Tile bg="#3789e6">
        <path d="M34 14 16 50M28 14l20 36M10 42h48" stroke="#fff" strokeWidth="5" strokeLinecap="round" fill="none" />
      </Tile>
    ),
  },
  {
    k: "settings",
    el: (
      <Tile bg="#a5a5a5">
        <circle cx="34" cy="34" r="26" fill="#505050" stroke="#333" strokeWidth="3" strokeDasharray="2 2" />
        <circle cx="34" cy="34" r="20" fill="#8b8b8b" />
        <circle cx="34" cy="34" r="13" fill="#5a5a5a" />
        <path d="M34 34V14M34 34 18 45M34 34l16 11" stroke="#9a9a9a" strokeWidth="4" />
      </Tile>
    ),
  },
];

const DOCK_APPS: { k: string; el: ReactNode }[] = [
  {
    k: "spotify",
    el: (
      <svg width="70" height="70" viewBox="0 0 70 70" fill="none" stroke="#1a1a1a" strokeLinecap="round" className="shrink-0 -m-[1px]">
        <circle cx="35" cy="35" r="35" fill="#5fd26e" stroke="none" />
        <path d="M14 25c14-5 30-3 42 4" strokeWidth="6" />
        <path d="M17 37c11-4 25-2 35 3" strokeWidth="5" />
        <path d="M20 48c9-3 20-2 28 3" strokeWidth="4" />
      </svg>
    ),
  },
  {
    k: "chrome",
    el: (
      <Tile bg="#f4f4f4">
        <circle cx="34" cy="34" r="32" fill="#4ca04e" />
        <path d="M6 18A32 32 0 0 1 62 18L34 20z" fill="#df4638" />
        <path d="M62 18A32 32 0 0 1 34 66L46 40z" fill="#f5be41" />
        <circle cx="34" cy="34" r="15" fill="#fff" />
        <circle cx="34" cy="34" r="11.5" fill="#3f7fe8" />
      </Tile>
    ),
  },
  {
    k: "word",
    el: (
      <Tile>
        <rect x="18" y="12" width="38" height="11" fill="#58a3ea" />
        <rect x="18" y="23" width="38" height="11" fill="#3d80d2" />
        <rect x="18" y="34" width="38" height="11" fill="#2a5eb8" />
        <rect x="18" y="45" width="38" height="11" fill="#1b3f90" />
        <rect x="9" y="27" width="24" height="24" rx="2" fill="#1d54b6" />
        <text x="21" y="46" textAnchor="middle" fontSize="19" fill="#fff" fontFamily="Inter">W</text>
      </Tile>
    ),
  },
  {
    k: "excel",
    el: (
      <Tile>
        <rect x="18" y="12" width="38" height="11" fill="#63c08a" />
        <rect x="18" y="23" width="38" height="11" fill="#469c66" />
        <rect x="18" y="34" width="38" height="11" fill="#2e7d4b" />
        <rect x="18" y="45" width="38" height="11" fill="#1f5e37" />
        <rect x="9" y="27" width="24" height="24" rx="2" fill="#217346" />
        <text x="21" y="46" textAnchor="middle" fontSize="19" fill="#fff" fontFamily="Inter">X</text>
      </Tile>
    ),
  },
];

function DockDot({ on }: { on?: boolean }) {
  return <span className={`mt-[10px] w-[8px] h-[10px] rounded-full ${on ? "bg-[#a8a8a8]" : "bg-transparent"}`} />;
}

function Thumb({ kind }: { kind: "music" | "mail" | "sheet" }) {
  return (
    <svg width="78" height="68" viewBox="0 0 78 68" overflow="visible" className="shrink-0">
      {kind === "music" && (
        <g>
          <rect y="6" width="78" height="60" fill="#1f1f22" />
          <rect x="14" y="17" width="60" height="26" fill="#8d2138" />
          <text x="48" y="34" textAnchor="middle" fontSize="10" fill="#eee" fontFamily="Inter">Music</text>
          <rect x="52" y="50" width="24" height="24" rx="5" fill="#ec4d59" />
          <path d="M60 69V57l9-2v12" stroke="#fff" strokeWidth="2" fill="none" />
        </g>
      )}
      {kind === "mail" && (
        <g>
          <rect y="6" width="78" height="60" fill="#fff" />
          <rect width="78" height="4" y="6" fill="#2b3a4a" />
          {[16, 26, 36, 46, 56].map((y) => (
            <rect key={y} x="4" y={y} width="22" height="4" fill="#b5bdca" />
          ))}
          <rect x="52" y="48" width="25" height="26" rx="5" fill="#f0f0f0" />
          <circle cx="64" cy="60" r="10" fill="#3a8fe8" />
        </g>
      )}
      {kind === "sheet" && (
        <g>
          <rect y="6" width="78" height="58" fill="#fff" />
          <rect y="6" width="78" height="7" fill="#2b2b2b" />
          <rect x="2" y="32" width="24" height="9" fill="#41b51e" />
          <rect x="40" y="16" width="30" height="22" fill="#ffff9f" />
          <rect y="58" width="78" height="6" fill="#3a3a2a" />
          <rect x="52" y="50" width="24" height="24" rx="4" fill="#fff" />
          <rect x="58" y="54" width="14" height="16" fill="#2e7d4b" />
        </g>
      )}
    </svg>
  );
}

function Dock() {
  return (
    <div className="absolute left-[70px] top-[1684px] w-[2740px] h-[105px] rounded-[30px] border-2 border-[#6a6f75] bg-gradient-to-r from-[#1f2226] via-[#393c40] to-[#4a5058] pl-[14px] pt-[14px] flex items-start z-10">
      <div className="flex gap-[20.3px]">
        {DOCK_ICONS.map((d) => (
          <div key={d.k} className="relative w-[68px] flex flex-col items-center">
            {d.el}
            <DockDot on={d.on} />
            {d.k === "messages" && <span className="absolute -right-[10px] -top-[10px] w-[32px] h-[32px] rounded-full bg-[#e24a3b] text-white text-[18px] flex items-center justify-center font-['Inter',sans-serif]">11</span>}
            {d.k === "settings" && <span className="absolute -right-[10px] -top-[10px] w-[32px] h-[32px] rounded-full bg-[#e24a3b] text-white text-[18px] flex items-center justify-center font-['Inter',sans-serif]">2</span>}
          </div>
        ))}
      </div>
      <span className="ml-[34px] mt-[0px] w-[2px] h-[78px] bg-[#7d8288]" />
      <div className="ml-[25px] flex gap-[20px]">
        {DOCK_APPS.map((d) => (
          <div key={d.k} className="w-[68px] flex flex-col items-center">
            {d.el}
            <DockDot on />
          </div>
        ))}
      </div>
      <span className="ml-[30px] w-[2px] h-[78px] bg-[#7d8288]" />
      <div className="ml-[22px] flex gap-[10px]">
        <Thumb kind="music" />
        <Thumb kind="mail" />
        <Thumb kind="sheet" />
      </div>
      <svg width="62" height="78" viewBox="0 0 62 78" className="ml-[18px] -mt-[4px] shrink-0">
        <path d="M2 14h58l-6 56c-1 5-6 8-23 8S9 75 8 70z" fill="#8b8f94" />
        <path d="M4 12 14 4l8 7 8-9 10 9 10-7 8 9-4 6H8z" fill="#d8d8d8" />
        <path d="M22 26v42M40 26v42" stroke="#9c9fa3" strokeWidth="4" />
      </svg>
    </div>
  );
}

export default function App() {
  return (
    <div className="relative w-[2880px] h-[1800px] overflow-hidden bg-gradient-to-r from-[#0c0e11] via-[#30343a] to-[#6f7a85] flex flex-col">
      <MenuBar />
      <div className="flex flex-col flex-1 min-h-0">
        <TitleBar />
        <TabRow />
        <Ribbon />
        <Notice />
        <FormulaBar />
        <Sheet />
        <SheetTabs />
        <StatusBar />
      </div>
      <div className="absolute left-[1216px] top-[1790px] w-[240px] h-[10px] bg-gradient-to-r from-[#a8acb0] to-transparent" />
      <Dock />
    </div>
  );
}
